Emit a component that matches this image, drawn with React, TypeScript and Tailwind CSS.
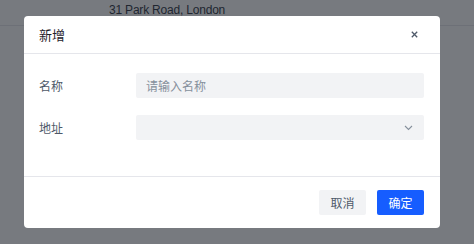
import React from 'react'

// Arco-style "新增" modal over a dimmed table page

const font = { fontFamily: '"Noto Sans CJK SC", "Noto Sans", sans-serif' }

function Backdrop() {
  return (
    <div className="h-[244px] w-[474px] bg-white">
      <div className="flex h-[26px] items-start border-b border-[#e5e6eb] pl-[109px]">
        <span
          className="pt-[2px] text-[12px] leading-[16px] tracking-[-0.2px] text-[#272e3b]"
          style={{ fontFamily: '"Liberation Sans", Arial, sans-serif' }}
        >
          31 Park Road, London
        </span>
      </div>
    </div>
  )
}

function FormRow({ label, children }: { label: string; children: React.ReactNode }) {
  return (
    <div className="flex items-center">
      <div className="w-[97px] text-[12px] text-[#4e5969]">{label}</div>
      <div className="flex-1">{children}</div>
    </div>
  )
}

export default function App() {
  return (
    <div className="relative h-[244px] w-[474px] overflow-hidden" style={font}>
      <Backdrop />
      <div className="absolute inset-0 bg-[rgba(29,33,41,0.6)]" />
      <div className="absolute left-[24px] top-[16px] flex h-[212px] w-[416px] flex-col rounded-[4px] bg-white">
        <div className="flex h-[38px] items-center justify-between border-b border-[#e5e6eb] pl-[15px] pr-[22px]">
          <span className="text-[13px] text-[#1d2129]">新增</span>
          <svg width="7" height="7" viewBox="0 0 7 7" className="text-[#4e5969]">
            <path d="M0.8 0.8L6.2 6.2M6.2 0.8L0.8 6.2" stroke="currentColor" strokeWidth="1.3" />
          </svg>
        </div>
        <div className="flex flex-1 flex-col gap-[17px] pl-[15px] pr-[16px] pt-[19px]">
          <FormRow label="名称">
            <div className="flex h-[25px] items-center rounded-[2px] bg-[#f2f3f5] px-[10px] text-[12px] text-[#86909c]">
              请输入名称
            </div>
          </FormRow>
          <FormRow label="地址">
            <div className="flex h-[25px] items-center justify-end rounded-[2px] bg-[#f2f3f5] pr-[11px] text-[#86909c]">
              <svg width="9" height="6" viewBox="0 0 9 6">
                <path d="M1 1l3.5 3.5L8 1" fill="none" stroke="currentColor" strokeWidth="1.1" />
              </svg>
            </div>
          </FormRow>
        </div>
        <div className="flex h-[52px] items-center justify-end gap-[11px] border-t border-[#e5e6eb] pr-[16px]">
          <button className="h-[25px] w-[47px] rounded-[2px] bg-[#f2f3f5] text-[12px] text-[#4e5969]">取消</button>
          <button className="h-[25px] w-[47px] rounded-[2px] bg-[#165dff] text-[12px] text-white">确定</button>
        </div>
      </div>
    </div>
  )
}
